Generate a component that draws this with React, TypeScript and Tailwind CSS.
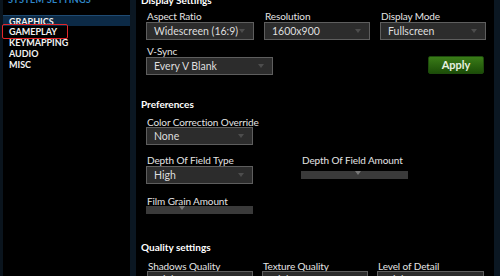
import clsx from 'clsx'

const MENU = ['GRAPHICS', 'GAMEPLAY', 'KEYMAPPING', 'AUDIO', 'MISC']

function Caret({ className }: { className?: string }) {
  return (
    <span
      className={clsx(
        'h-0 w-0 border-x-[3px] border-t-[4px] border-x-transparent border-t-[#4d4d4d]',
        className
      )}
    />
  )
}

function Dropdown({ value, className }: { value: string; className?: string }) {
  return (
    <div
      className={clsx(
        'flex h-[18px] items-center whitespace-nowrap border border-[#5e5e5e] bg-[#2c2c2c] pl-[7px] text-[10.5px] leading-none text-[#dedede]',
        className
      )}
    >
      <span>{value}</span>
      <Caret className="ml-auto mr-[8px] shrink-0" />
    </div>
  )
}

function Slider({ className, at }: { className?: string; at: string }) {
  return (
    <div className={clsx('relative h-[8px] bg-[#3a3a3a]', className)}>
      <Caret className={clsx('absolute top-0 border-t-[#777]', at)} />
    </div>
  )
}

function Label({ children, className }: { children: string; className?: string }) {
  return (
    <div
      className={clsx(
        'whitespace-nowrap pl-[1px] text-[10px] leading-[10px] tracking-[-0.1px] text-[#e4e4e4]',
        className
      )}
    >
      {children}
    </div>
  )
}

function Heading({ children, className }: { children: string; className?: string }) {
  return (
    <div className={clsx('whitespace-nowrap text-[10px] font-bold leading-[10px] text-white', className)}>
      {children}
    </div>
  )
}

function Separator({ className }: { className?: string }) {
  return (
    <div
      className={clsx(
        'h-[2px] bg-gradient-to-r from-transparent via-[#5a5a5a] to-transparent',
        className
      )}
    />
  )
}

export default function App() {
  return (
    <div className="flex h-[276px] w-[500px] overflow-hidden bg-black font-['Lato',sans-serif]">
      <aside className="flex w-[130px] shrink-0 flex-col border-l-[3px] border-[#0a141d] text-[9px] font-bold">
        <div className="-mt-[5px] whitespace-nowrap pl-[5px] leading-[10px] tracking-[0.3px] text-[#2f86c8]">
          SYSTEM SETTINGS
        </div>
        <ul className="mt-[10px] flex flex-col">
          {MENU.map((item, i) => (
            <li
              key={item}
              className={clsx(
                'relative h-[11px] whitespace-nowrap pl-[6px] leading-[11px] text-[#f2f2f2]',
                i === 0 && 'border-t border-[#1f4b73] bg-[#0c2a46] leading-[12px]'
              )}
            >
              {item}
              {i === 1 && (
                <span className="absolute -top-[2px] left-[-1px] h-[15px] w-[66px] rounded-[2px] border-[1.5px] border-[#e3262a]" />
              )}
            </li>
          ))}
        </ul>
      </aside>

      <main className="flex flex-1 flex-col border-x-[6px] border-l-[#0b1722] border-r-[#0b1722] pl-[5px]">
        <Heading className="-mt-[5px]">Display Settings</Heading>

        <div className="ml-[5px] mt-[6px] grid grid-cols-[108px_106px_106px] gap-x-[10px]">
          <Label>Aspect Ratio</Label>
          <Label>Resolution</Label>
          <Label>Display Mode</Label>
          <Dropdown value="Widescreen (16:9)" className="mt-[1px]" />
          <Dropdown value="1600x900" className="mt-[1px]" />
          <Dropdown value="Fullscreen" className="mt-[1px]" />
        </div>

        <div className="ml-[5px] mt-[6px] flex items-end">
          <div className="w-[127px]">
            <Label>V-Sync</Label>
            <Dropdown value="Every V Blank" className="mt-[1px]" />
          </div>
          <button className="mb-[1px] ml-auto mr-[10px] h-[18px] w-[56px] rounded-[2px] border border-[#1d4a0c] bg-gradient-to-b from-[#3a7c18] to-[#1c4e08] text-[11px] font-bold text-[#e8f2e0]">
            Apply
          </button>
        </div>

        <Separator className="ml-[12px] mr-[8px] mt-[15px]" />

        <Heading className="mt-[9px]">Preferences</Heading>

        <div className="ml-[5px] mt-[8px] grid grid-cols-[107px_107px] gap-x-[48px]">
          <div className="flex flex-col">
            <Label>Color Correction Override</Label>
            <Dropdown value="None" />
            <Label className="mt-[10px]">Depth Of Field Type</Label>
            <Dropdown value="High" className="mt-[1px]" />
            <Label className="mt-[12px]">Film Grain Amount</Label>
            <Slider at="left-[31%]" />
          </div>
          <div className="flex flex-col pt-[38px]">
            <Label>Depth Of Field Amount</Label>
            <Slider at="left-[50%]" className="mt-[6px]" />
          </div>
        </div>

        <Separator className="ml-[8px] mr-[10px] mt-[19px]" />

        <Heading className="mt-[9px]">Quality settings</Heading>

        <div className="ml-[6px] mt-[9px] grid grid-cols-[106px_106px_107px] gap-x-[9px]">
          <Label>Shadows Quality</Label>
          <Label>Texture Quality</Label>
          <Label>Level of Detail</Label>
          <Dropdown value="High" />
          <Dropdown value="High" />
          <Dropdown value="High" />
        </div>
      </main>
    </div>
  )
}
